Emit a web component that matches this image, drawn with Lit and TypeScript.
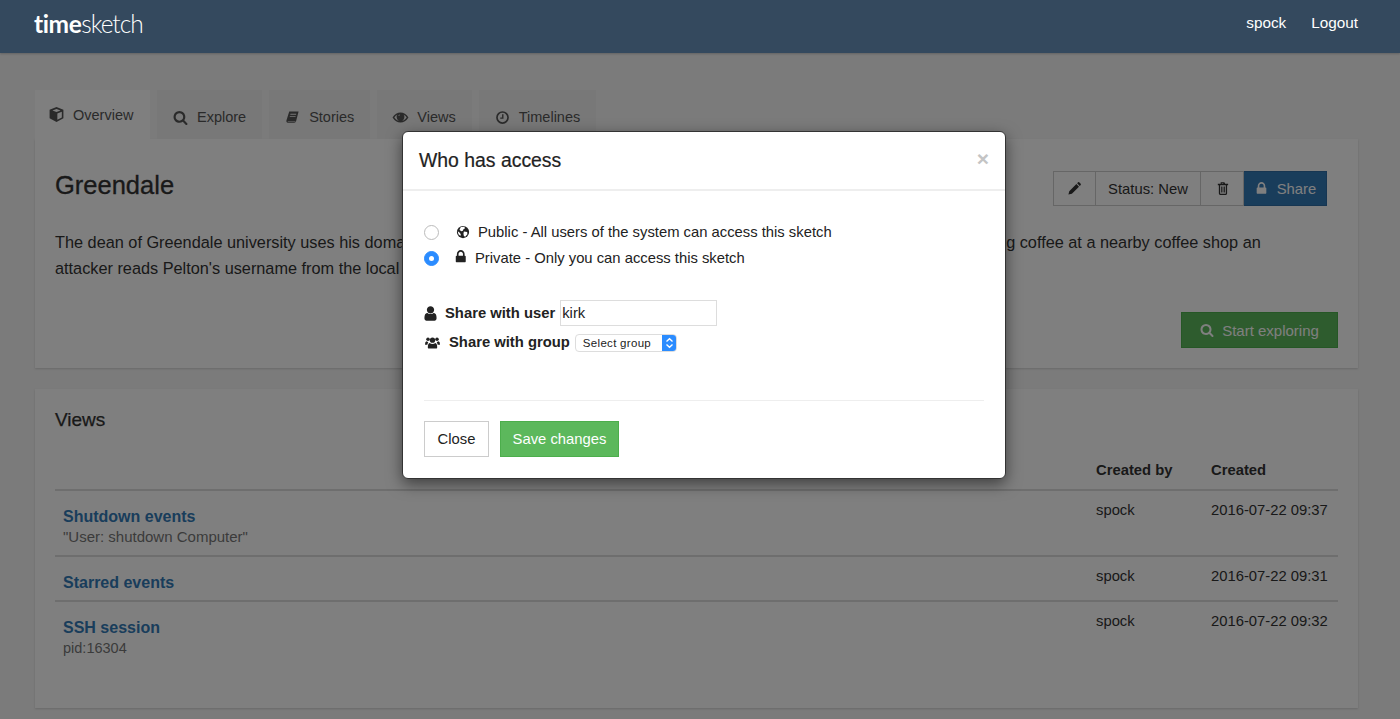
import { LitElement, html, css, svg } from "lit";
import { customElement } from "lit/decorators.js";

const fa = (d: string, cls = "") => html`<svg class="ic ${cls}" viewBox="0 0 1792 1792"><path fill="currentColor" d=${d}></path></svg>`;
const SEARCH = "M1216 832q0-185-131.5-316.5t-316.5-131.5-316.5 131.5-131.5 316.5 131.5 316.5 316.5 131.5 316.5-131.5 131.5-316.5zm512 832q0 52-38 90t-90 38q-54 0-90-38l-343-342q-179 124-399 124-143 0-273.5-55.5t-225-150-150-225-55.5-273.5 55.5-273.5 150-225 225-150 273.5-55.5 273.5 55.5 225 150 150 225 55.5 273.5q0 220-124 399l343 343q37 37 37 90z";
const LOCK = "M640 768h512v-192q0-106-75-181t-181-75-181 75-75 181v192zm832 96v576q0 40-28 68t-68 28h-960q-40 0-68-28t-28-68v-576q0-40 28-68t68-28h32v-192q0-184 132-316t316-132 316 132 132 316v192h32q40 0 68 28t28 68z";
const USER = "M1536 1399q0 109-62.5 187t-150.5 78h-854q-88 0-150.5-78t-62.5-187q0-85 8.5-160.5t31.5-152 58.5-131 94-89 134.5-34.5q131 128 313 128t313-128q76 0 134.5 34.5t94 89 58.5 131 31.5 152 8.5 160.5zm-256-887q0 159-112.5 271.5t-271.5 112.5-271.5-112.5-112.5-271.5 112.5-271.5 271.5-112.5 271.5 112.5 112.5 271.5z";
const s = (body: unknown, cls = "") => html`<svg class="ic ${cls}" viewBox="0 0 16 16">${body}</svg>`;
const cube = s(svg`<path fill="currentColor" fill-rule="evenodd" d="M8 1l6.500 2.600v8L8 15l-6.500-3.400v-8zM8 2.800L4.200 4.200 8 5.700l3.800-1.500zM8.800 7v6l4.200-2.200V5.300z"/>`, "big");
const book = s(svg`<path fill="currentColor" fill-rule="evenodd" d="M4.500 1.500h10l-2.700 10.500q-.3 1.500-2 1.500H2.800q-1.800 0-1.300-2.300zM5.800 4l-.2 1h6.200l.2-1zM5.200 6.300l-.2 1h6.200l.2-1zM2.900 12.200h8.300l-.2.600H3z"/>`);
const eye = s(svg`<path fill="currentColor" fill-rule="evenodd" d="M.5 8Q3.500 3.300 8 3.300T15.500 8Q12.500 12.700 8 12.700T.500 8zM2.200 8Q4.600 11.300 8 11.300T13.800 8Q12.600 6.200 11 5.400 11.700 6.400 11.700 7.600 11.700 9.200 10.600 10.300T8 11.300Q6.400 11.300 5.400 10.300T4.300 7.600Q4.300 6.400 5 5.400 3.400 6.200 2.200 8zM7.800 5Q6.300 5 6 6.600H7V5.700Z"/>`, "big");
const clock = s(svg`<circle cx="8" cy="8" r="5.900" fill="none" stroke="currentColor" stroke-width="1.800"/><path fill="none" stroke="currentColor" stroke-width="1.500" d="M8.300 4.400V8.700H5.600"/>`);
const pencil = s(svg`<path fill="currentColor" d="M1.500 14.500l.9-3.700 7.600-7.600 2.800 2.800-7.600 7.600zM10.800 2.400l1-1q.6-.5 1.200 0l1.600 1.600q.5.6 0 1.200l-1 1z"/>`);
const trash = s(svg`<path fill="currentColor" fill-rule="evenodd" d="M6 1.200h4l.9 1.800h3.100v1.400h-1.100v9q0 1.400-1.400 1.400H5.500q-1.400 0-1.400-1.400v-9H3V3h3.100zM7 3h2l-.4-.7H7.400zM5.500 4.400v9.200h6V4.400zM6.600 5.800h.9v6.500h-.9zM8.100 5.800h.9v6.500h-.9zM9.600 5.800h.9v6.500h-.9z"/>`);
const globe = s(svg`<circle cx="8" cy="8" r="7" fill="currentColor"/><path fill="#fff" d="M5.500 2.400L9.500 2l.8 1.700-2 1.300-.4 1.500-2 .5L4 5.500zM9 7.500l3.800.5.2 2.500-2.500 3-1.500-1-.5-2.500zM2 7l2 1.500 1.500 2L5 12.500 2.800 10.500z"/>`, "globe");
const group = s(svg`<circle cx="8" cy="5.500" r="2.800" fill="currentColor"/><circle cx="3.200" cy="4.600" r="1.900" fill="currentColor"/><circle cx="12.800" cy="4.600" r="1.900" fill="currentColor"/><path fill="currentColor" d="M3.800 14.500q-.8-.3-.8-1.200 0-4.300 2-4.700 1.300 1 3 1t3-1q2 .4 2 4.700 0 .9-.8 1.200zM0 10q0-3 1.500-3.300.8.7 2 .7-.4 .7-1 2.900H.6Q0 10.300 0 10zM16 10q0-3-1.500-3.300-.8.7-2 .7.400.7 1 2.900h1.900Q16 10.300 16 10z"/>`, "wide");

@customElement("app-root")
export class AppRoot extends LitElement {
  static styles = css`
    :host { display: block; position: relative; height: 719px; overflow: hidden; background: #f6f6f6; font-family: "Liberation Sans", Arial, sans-serif; font-size: 16px; color: #333; }
    * { box-sizing: border-box; }
    .ic { width: 14px; height: 14px; flex: none; display: block; }
    .nav { position: relative; z-index: 3; height: 53px; background: #34495e; color: #fff; display: flex; align-items: center; justify-content: space-between; padding: 0 42px 7px 34px; box-shadow: 0 1px 2px rgba(0,0,0,.2); }
    .logo { font-family: Lato, sans-serif; font-size: 24.500px; color: #fff; letter-spacing: -1px; font-weight: 300; }
    .logo b { font-weight: 700; letter-spacing: -.4px; }
    .nav-links { display: flex; gap: 25px; font-size: 15.300px; }
    .main { padding: 37px 42px 0 35px; }
    .tabs { display: flex; gap: 7px; height: 49px; }
    .tab { display: flex; align-items: center; gap: 9px; padding: 5px 16px 0 16px; background: #f0f0f0; color: #555; font-size: 14.500px; }
    .tab.active { background: #fff; padding: 0 16px 0 14px; color: #555; width: 115px; }
    .tab .ic { width: 15px; height: 15px; }
    .tab .ic.big { width: 17px; height: 17px; margin: 0 -1px; }
    .card { background: #fff; box-shadow: 0 1px 2px rgba(0,0,0,.15); padding: 20px; }
    .sketch { height: 229px; display: flex; flex-direction: column; }
    .sketch-head { display: flex; justify-content: space-between; align-items: flex-start; padding: 12px 11px 0 0; height: 47px; }
    h1 { margin: 0; font-size: 25.500px; line-height: 28px; font-weight: 400; color: #333; -webkit-text-stroke: .3px #333; }
    .btn-group { display: flex; height: 35px; font-size: 14.800px; color: #333; }
    .bg { display: flex; align-items: center; justify-content: center; gap: 8px; border: 1px solid #ccc; border-left-width: 0; background: #fff; }
    .bg:first-child { border-left-width: 1px; }
    .bg .ic { width: 15px; height: 15px; }
    .bg.edit { width: 43px; } .bg.status { width: 105px; } .bg.del { width: 43px; }
    .bg.share { width: 83px; background: #337ab7; border-color: #2e6da4; color: #fff; }
    .desc { margin: 23px 0 0; line-height: 26px; color: #333; width: 1270px; font-size: 16.300px; white-space: nowrap; }
    .explore-row { margin-top: auto; display: flex; justify-content: flex-end; }
    .explore { display: flex; align-items: center; gap: 8px; width: 157px; height: 36px; justify-content: center; background: #5cb85c; border: 1px solid #4cae4c; color: #fff; font-size: 15px; }
    .views { margin-top: 21px; height: 319px; padding-top: 20px; }
    h2 { margin: 0; font-size: 19px; line-height: 22px; font-weight: 400; color: #333; -webkit-text-stroke: .25px #333; }
    .row { display: grid; grid-template-columns: 1fr 115px 119px; padding: 0 8px; font-size: 14.800px; }
    .thead { margin-top: 29px; height: 31px; border-bottom: 2px solid #ddd; font-weight: 700; align-items: start; padding-top: 0; line-height: 20px; }
    .tr { border-bottom: 2px solid #ddd; padding-top: 9px; line-height: 20px; }
    .tr:last-child { border: 0; }
    .r1 { height: 66px; } .r2 { height: 45px; } .r3 { height: 60px; }
    .tr a { display: block; color: #337ab7; font-weight: 700; font-size: 16px; line-height: 18px; padding-top: 8px; }
    .tr small { display: block; font-size: 15px; color: #777; line-height: 18px; margin-top: 2px; }
    .tr .pid { font-size: 14.500px; }
    .backdrop { position: absolute; inset: 0; background: rgba(0,0,0,.5); z-index: 1; }
    .modal { position: absolute; z-index: 2; left: 402px; top: 131px; width: 604px; height: 348px; background: #fff; border-radius: 6px; border: 1px solid #333; box-shadow: 0 5px 15px rgba(0,0,0,.5); color: #222; }
    .m-head { height: 59px; border-bottom: 2px solid #eee; display: flex; align-items: center; justify-content: space-between; padding: 0 16px 0 16px; }
    .m-title { font-size: 19.400px; color: #222; -webkit-text-stroke: .2px #222; }
    .x { font-size: 21px; font-weight: 700; color: #c4c4c4; padding-bottom: 4px; }
    .m-body { padding: 28px 21px 0; font-size: 14.800px; }
    .radio-line { display: flex; align-items: center; height: 26px; }
    .radio { width: 15px; height: 15px; border-radius: 50%; border: 1px solid #bbb; background: #fff; flex: none; margin-right: 17px; }
    .radio.on { background: #2b8cff; border-color: #2b8cff; position: relative; }
    .radio.on::after { content: ""; position: absolute; left: 4px; top: 4px; width: 5px; height: 5px; border-radius: 50%; background: #fff; }
    .radio-line .ic { width: 15.500px; height: 15.500px; margin: -2px 6.500px 0 -3px; color: #222; }
    .radio-line .ic.globe { width: 14px; height: 14px; margin: -1px 8px 0 0; }
    .share-line { display: flex; align-items: center; font-weight: 700; }
    .share-line .ic { width: 17px; height: 17px; margin: 0 6px 0 -2px; }
    .share-line .ic.wide { width: 17px; height: 15px; margin: 0 8px 0 0; }
    .u { margin-top: 29px; height: 26px; }
    .g { margin-top: 3px; height: 26px; }
    .input { width: 157px; height: 26px; margin-left: 5px; border: 1px solid #ddd; font-weight: 400; padding: 0 1px; display: flex; align-items: center; color: #222; font-size: 14.800px; }
    .select { display: flex; align-items: center; justify-content: space-between; width: 102px; height: 18px; margin: 2px 0 0 5px; border: 1px solid #ddd; border-radius: 4px; background: #fff; font-weight: 400; font-size: 11.500px; letter-spacing: .3px; padding-left: 7px; overflow: hidden; color: #222; }
    .stepper { width: 15px; height: 18px; background: #2b8cff; display: flex; align-items: center; justify-content: center; margin-right: -1px; }
    .stepper svg { width: 9px; height: 12px; display: block; }
    .m-hr { margin: 45px 21px 0; border-top: 1px solid #eee; }
    .m-foot { display: flex; gap: 11px; padding: 20px 21px 0; }
    .m-btn { height: 36px; display: flex; align-items: center; justify-content: center; font-size: 14.800px; }
    .close { width: 65px; border: 1px solid #ccc; background: #fff; color: #222; }
    .save { width: 119px; background: #5cb85c; border: 1px solid #4cae4c; color: #fff; }
  `;

  rows = [
    { cls: "r1", name: "Shutdown events", sub: '"User: shutdown Computer"', subCls: "", date: "2016-07-22 09:37" },
    { cls: "r2", name: "Starred events", sub: "", subCls: "", date: "2016-07-22 09:31" },
    { cls: "r3", name: "SSH session", sub: "pid:16304", subCls: "pid", date: "2016-07-22 09:32" },
  ];

  render() {
    return html`
      <div class="nav">
        <div class="logo"><b>time</b>sketch</div>
        <div class="nav-links"><span>spock</span><span>Logout</span></div>
      </div>
      <div class="main">
        <div class="tabs">
          <div class="tab active">${cube}Overview</div>
          <div class="tab">${fa(SEARCH)}Explore</div>
          <div class="tab">${book}Stories</div>
          <div class="tab">${eye}Views</div>
          <div class="tab">${clock}Timelines</div>
        </div>
        <div class="card sketch">
          <div class="sketch-head">
            <h1>Greendale</h1>
            <div class="btn-group">
              <div class="bg edit">${pencil}</div>
              <div class="bg status">Status: New</div>
              <div class="bg del">${trash}</div>
              <div class="bg share">${fa(LOCK)}Share</div>
            </div>
          </div>
          <p class="desc">The dean of Greendale university uses his domain account to sign in to webmail from an open public wireless network. While drinking coffee at a nearby coffee shop an<br>attacker reads Pelton's username from the local network traffic and uses it to log in.</p>
          <div class="explore-row"><div class="explore">${fa(SEARCH)}Start exploring</div></div>
        </div>
        <div class="card views">
          <h2>Views</h2>
          <div class="row thead"><span></span><span>Created by</span><span>Created</span></div>
          ${this.rows.map((r) => html`
            <div class="row tr ${r.cls}">
              <div><a>${r.name}</a>${r.sub ? html`<small class=${r.subCls}>${r.sub}</small>` : ""}</div>
              <span>spock</span><span>${r.date}</span>
            </div>`)}
        </div>
      </div>
      <div class="backdrop"></div>
      <div class="modal">
        <div class="m-head"><span class="m-title">Who has access</span><span class="x">×</span></div>
        <div class="m-body">
          <div class="radio-line"><span class="radio"></span>${globe}Public - All users of the system can access this sketch</div>
          <div class="radio-line"><span class="radio on"></span>${fa(LOCK)}Private - Only you can access this sketch</div>
          <div class="share-line u">${fa(USER)}Share with user<span class="input">kirk</span></div>
          <div class="share-line g">${group}Share with group<span class="select">Select group<span class="stepper"><svg viewBox="0 0 9 12"><path d="M1.500 4.500L4.500 1.800 7.500 4.500M1.500 7.500L4.500 10.200 7.500 7.500" fill="none" stroke="#fff" stroke-width="1.400"/></svg></span></span></div>
        </div>
        <div class="m-hr"></div>
        <div class="m-foot"><div class="m-btn close">Close</div><div class="m-btn save">Save changes</div></div>
      </div>
    `;
  }
}
